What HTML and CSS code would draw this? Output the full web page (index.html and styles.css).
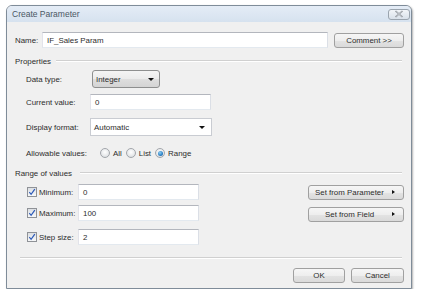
FILE: index.html
```html
<!DOCTYPE html>
<html>
<head>
<meta charset="utf-8">
<link rel="stylesheet" href="styles.css">
</head>
<body>
<div class="window">
  <div class="titlebar">
    <span class="title">Create Parameter</span>
    <span class="close">
      <svg width="10" height="8" viewBox="0 0 10 8"><path d="M1.5 1 L8.5 7 M8.5 1 L1.5 7" stroke="#8a8f96" stroke-width="1.6" fill="none"/><path d="M1.5 1 L8.5 7 M8.5 1 L1.5 7" stroke="#e9ecef" stroke-width="0.5" fill="none"/></svg>
    </span>
  </div>
  <div class="content">
    <div class="row name-row">
      <span class="name-label">Name:</span>
      <div class="input name-input">IF_Sales Param</div>
      <div class="btn comment-btn">Comment &gt;&gt;</div>
    </div>

    <div class="group-head props-head"><span>Properties</span><span class="gline"></span></div>

    <div class="row datatype-row">
      <span class="plabel">Data type:</span>
      <div class="combo btn-combo">Integer<span class="arrow"></span></div>
    </div>
    <div class="row current-row">
      <span class="plabel">Current value:</span>
      <div class="input value-input">0</div>
    </div>
    <div class="row format-row">
      <span class="plabel">Display format:</span>
      <div class="combo white-combo">Automatic<span class="arrow"></span></div>
    </div>
    <div class="row allow-row">
      <span class="plabel">Allowable values:</span>
      <span class="radio-item"><span class="radio"></span>All</span>
      <span class="radio-item"><span class="radio"></span>List</span>
      <span class="radio-item"><span class="radio checked"></span>Range</span>
    </div>

    <div class="group-head range-head"><span>Range of values</span><span class="gline"></span></div>

    <div class="row crow min-row">
      <span class="check"><svg width="8" height="8" viewBox="0 0 8 8"><path d="M1.3 4.2 L3.1 6.3 L6.8 1.2" stroke="#2b59b8" stroke-width="1.2" fill="none"/></svg></span>
      <span class="clabel">Minimum:</span>
      <div class="input range-input">0</div>
      <div class="btn set-btn">Set from Parameter<span class="tri"></span></div>
    </div>
    <div class="row crow max-row">
      <span class="check"><svg width="8" height="8" viewBox="0 0 8 8"><path d="M1.3 4.2 L3.1 6.3 L6.8 1.2" stroke="#2b59b8" stroke-width="1.2" fill="none"/></svg></span>
      <span class="clabel">Maximum:</span>
      <div class="input range-input">100</div>
      <div class="btn set-btn field-btn">Set from Field<span class="tri"></span></div>
    </div>
    <div class="row crow step-row">
      <span class="check"><svg width="8" height="8" viewBox="0 0 8 8"><path d="M1.3 4.2 L3.1 6.3 L6.8 1.2" stroke="#2b59b8" stroke-width="1.2" fill="none"/></svg></span>
      <span class="clabel">Step size:</span>
      <div class="input range-input">2</div>
    </div>

    <div class="separator"></div>

    <div class="row footer">
      <div class="btn ok-btn">OK</div>
      <div class="btn cancel-btn">Cancel</div>
    </div>
  </div>
</div>
</body>
</html>
```

FILE: styles.css
```css
body {
  margin: 0;
  background: #ffffff;
  font-family: "Liberation Sans", Arial, sans-serif;
  font-size: 7.9px;
  color: #2c2c2c;
}

.window {
  margin: 5px 0 0 6px;
  width: 406px;
  height: 284px;
  box-sizing: border-box;
  border: 1px solid #7f8c99;
  border-radius: 6px 6px 0 0;
  background: #f0f0f0;
  box-shadow: 1px 1px 2px rgba(0, 0, 0, 0.3);
  display: flex;
  flex-direction: column;
}

.titlebar {
  height: 16px;
  display: flex;
  align-items: center;
  padding: 0 1px 0 5px;
  border-radius: 5px 5px 0 0;
  background: linear-gradient(#e4ecf6, #d6e2ef);
}

.title {
  flex: 1;
  font-size: 8.5px;
  color: #4a5764;
}

.close {
  width: 22px;
  height: 11px;
  box-sizing: border-box;
  border: 1px solid #9aa4ae;
  border-radius: 3px;
  background: linear-gradient(#f2f5f8, #d9e1ea);
  display: flex;
  align-items: center;
  justify-content: center;
}

.content {
  padding: 10px 7px 0 8px;
  display: flex;
  flex-direction: column;
}

.row {
  display: flex;
  align-items: center;
}

.input {
  box-sizing: border-box;
  height: 16px;
  background: #ffffff;
  border: 1px solid;
  border-color: #b3b6bd #dbdfe6 #e3e9ef #e2e3ea;
  display: flex;
  align-items: center;
  padding-left: 4px;
  flex-shrink: 0;
}

.btn {
  box-sizing: border-box;
  height: 15px;
  border: 1px solid #a0a0a0;
  border-radius: 3px;
  background: linear-gradient(#f6f6f6 0%, #eeeeee 50%, #e3e3e3 51%, #dadada 100%);
  display: flex;
  align-items: center;
  justify-content: center;
  color: #2c2c2c;
  flex-shrink: 0;
}

/* name row */
.name-row { height: 16px; }
.name-label { width: 27px; }
.name-input { width: 286px; }
.comment-btn { width: 70px; margin-left: 6px; }

/* group headers */
.group-head {
  height: 12px;
  display: flex;
  align-items: center;
  padding-right: 2px;
}
.props-head { margin-top: 7px; }
.range-head { margin-top: 8px; }
.gline {
  flex: 1;
  height: 0;
  border-top: 1px solid #d0d0d0;
  border-bottom: 1px solid #ffffff;
  margin-left: 5px;
  margin-top: -1px;
}
.range-head .gline { margin-left: 8px; }

/* properties rows */
.plabel {
  width: 64px;
  margin-left: 11px;
  flex-shrink: 0;
}
.datatype-row { margin-top: 3px; height: 18px; }
.current-row { margin-top: 6px; height: 16px; }
.format-row { margin-top: 8px; height: 18px; }
.allow-row { margin-top: 11px; height: 12px; }

.value-input { width: 121px; }

.combo {
  position: relative;
  box-sizing: border-box;
  height: 18px;
  display: flex;
  align-items: center;
  padding-left: 3px;
  flex-shrink: 0;
}
.btn-combo {
  width: 68px;
  margin-left: 2px;
  border: 1px solid #8e8f8f;
  border-radius: 3px;
  background: linear-gradient(#f4f4f4 0%, #ebebeb 50%, #dedede 51%, #d4d4d4 100%);
}
.white-combo {
  width: 122px;
  border: 1px solid #c9ccd2;
  background: #ffffff;
}
.arrow {
  position: absolute;
  top: 7px;
  width: 0;
  height: 0;
  border-left: 3px solid transparent;
  border-right: 3px solid transparent;
  border-top: 3px solid #111;
}
.btn-combo .arrow { right: 5px; }
.white-combo .arrow { right: 6px; }

.radio-item {
  display: flex;
  align-items: center;
  margin-right: 4px;
}
.allow-row .plabel { width: 74px; }
.radio {
  box-sizing: border-box;
  width: 10px;
  height: 10px;
  border-radius: 50%;
  border: 1px solid #a2a6ab;
  background: radial-gradient(circle at 50% 40%, #ffffff 0%, #e6e8ea 60%, #cfd3d7 100%);
  margin-right: 3px;
  position: relative;
}
.radio.checked::after {
  content: "";
  position: absolute;
  left: 1.5px;
  top: 1.5px;
  width: 5px;
  height: 5px;
  border-radius: 50%;
  background: radial-gradient(circle at 40% 35%, #8fd0f5 0%, #2a7fc4 60%, #19569a 100%);
}

/* range rows */
.crow { padding-left: 12px; height: 16px; }
.min-row { margin-top: 5px; }
.max-row { margin-top: 5px; }
.step-row { margin-top: 8px; }

.check {
  box-sizing: border-box;
  width: 10px;
  height: 10px;
  border: 1px solid #8f9297;
  background: linear-gradient(#dcdfe3, #f7f8f9);
  display: flex;
  align-items: center;
  justify-content: center;
  flex-shrink: 0;
}
.clabel {
  width: 39px;
  margin-left: 2px;
  flex-shrink: 0;
}
.range-input { width: 121px; }

.set-btn {
  width: 96px;
  margin-left: auto;
  position: relative;
  justify-content: flex-start;
  padding-left: 6px;
}
.field-btn {
  align-self: flex-end;
  margin-bottom: -1px;
  padding-left: 16px;
}
.tri {
  position: absolute;
  right: 8px;
  top: 4px;
  width: 0;
  height: 0;
  border-top: 2.5px solid transparent;
  border-bottom: 2.5px solid transparent;
  border-left: 3px solid #111;
}

.separator {
  margin: 12px 2px 0 5px;
  border-top: 1px solid #d0d0d0;
  border-bottom: 1px solid #ffffff;
}

.footer {
  margin-top: 9px;
  height: 15px;
  justify-content: flex-end;
}
.ok-btn { width: 52px; }
.cancel-btn { width: 53px; margin-left: 6px; }
```
